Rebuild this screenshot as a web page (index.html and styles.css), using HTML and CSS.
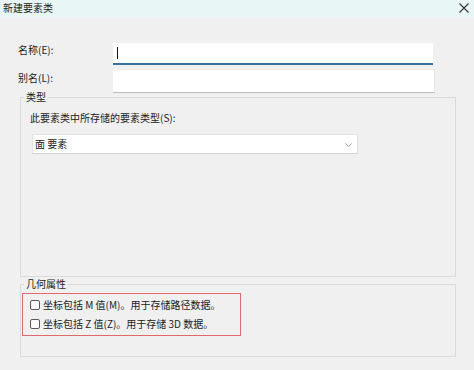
FILE: index.html
```html
<!DOCTYPE html>
<html lang="zh-CN">
<head>
<meta charset="utf-8">
<title>新建要素类</title>
<link rel="stylesheet" href="styles.css">
</head>
<body>
<div class="dialog">
  <div class="titlebar">
    <span class="title">新建要素类</span>
    <svg class="close" width="10" height="10" viewBox="0 0 10 10"><path d="M0.5 0.5 L9.5 9.5 M9.5 0.5 L0.5 9.5" stroke="#333" stroke-width="1.1" fill="none"/></svg>
  </div>
  <div class="fields">
    <div class="row">
      <label class="lbl">名称(E):</label>
      <div class="input input-focus"><span class="caret"></span></div>
    </div>
    <div class="row row-alias">
      <label class="lbl">别名(L):</label>
      <div class="input input-plain"></div>
    </div>
  </div>
  <div class="groups">
    <fieldset class="group group-type">
      <legend>类型</legend>
      <div class="group-body">
        <div class="hint">此要素类中所存储的要素类型(S):</div>
        <div class="select">
          <span>面 要素</span>
          <svg class="chev" width="7" height="4" viewBox="0 0 7 4"><path d="M0.5 0.5 L3.5 3.5 L6.5 0.5" stroke="#8a8a8a" stroke-width="0.9" fill="none"/></svg>
        </div>
      </div>
    </fieldset>
    <fieldset class="group group-geom">
      <legend>几何属性</legend>
      <div class="group-body2">
        <div class="highlight">
          <div class="check-row"><span class="box"></span><span>坐标包括 M 值(M)。用于存储路径数据。</span></div>
          <div class="check-row"><span class="box"></span><span>坐标包括 Z 值(Z)。用于存储 3D 数据。</span></div>
        </div>
      </div>
    </fieldset>
  </div>
</div>
</body>
</html>
```

FILE: styles.css
```css
* { box-sizing: border-box; }
html, body { margin: 0; padding: 0; }
body {
  width: 474px;
  height: 370px;
  background: #f0f0f0;
  font-family: "Noto Sans CJK SC", "Noto Sans", sans-serif;
  font-size: 10px;
  color: #1b1b1b;
  overflow: hidden;
}
.dialog { display: flex; flex-direction: column; width: 474px; height: 370px; }
.titlebar {
  height: 18px;
  background: #e8f6f5;
  display: flex;
  align-items: flex-start;
  justify-content: space-between;
  padding: 1px 5px 0 3px;
}
.title { line-height: 13px; color: #222; }
.close { margin-top: 2px; }
.fields { padding: 25px 0 0 18px; display: flex; flex-direction: column; gap: 5px; }
.row { display: flex; align-items: flex-start; }
.lbl { width: 95px; line-height: 12px; padding-top: 1px; }
.row-alias .lbl { padding-top: 2px; }
.input { width: 320px; background: #fff; position: relative; }
.input-focus { height: 22px; border-bottom: 2px solid #3b6f9c; }
.input-plain { height: 23px; width: 322px; border-bottom: 1px solid #bdbdbd; border-right: 1px solid #e4e4e4; }
.caret { position: absolute; left: 4px; top: 4px; width: 1px; height: 12px; background: #111; }
.groups { padding: 0 18px 0 20px; display: flex; flex-direction: column; }
.group {
  margin: 0;
  padding: 0;
  border: 1px solid #dadada;
  min-width: 0;
}
.group legend {
  margin-left: 3px;
  padding: 0 2px;
  line-height: 12px;
}
.group-type { margin-top: -2px; }
.group-body { padding: 9px 0 122px 9px; }
.hint { line-height: 12px; }
.select {
  margin: 10px 0 0 2px;
  width: 326px;
  height: 20px;
  background: #fff;
  border: 1px solid #e2e2e2;
  border-bottom-color: #d2d2d2;
  display: flex;
  align-items: center;
  justify-content: space-between;
  padding: 0 5px 0 2px;
  line-height: 12px;
}
.chev { margin-top: 1px; }
.group-geom { margin-top: 1px; }
.group-body2 { padding: 3px 0 20px 1px; }
.highlight {
  width: 219px;
  border: 1px solid #e06a6a;
  padding: 1px 0 2px 7px;
}
.check-row { height: 19px; display: flex; align-items: center; gap: 3px; line-height: 12px; }
.box {
  width: 10px;
  height: 10px;
  border: 1px solid #5a5a5a;
  border-radius: 2px;
  background: #fdfdfd;
  flex: none;
}
```
